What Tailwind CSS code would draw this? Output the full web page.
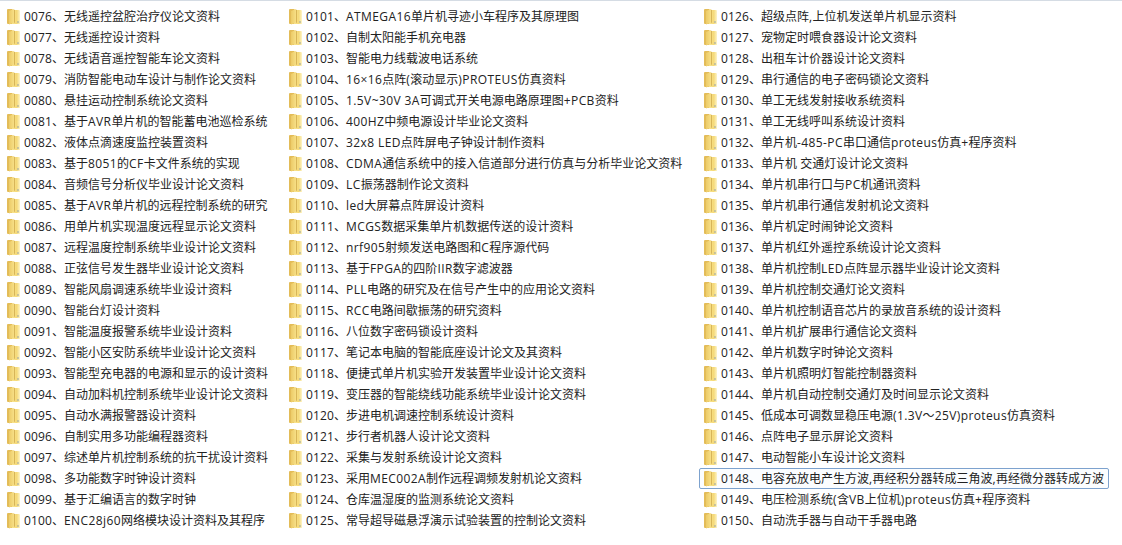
<!DOCTYPE html>
<html lang="zh">
<head>
    <meta charset="UTF-8">
    <title>资料目录</title>
    <script src="https://cdn.jsdelivr.net/npm/@tailwindcss/browser@4"></script>
</head>
<body class="bg-white overflow-hidden">
    <div id="list" class="w-[1122px] h-[545px] flex pt-[5px] border-t border-[#d5dce4] text-[12px] leading-[21px] text-[#222] font-['Open_Sans','Noto_Sans_CJK_SC',sans-serif]">
        <div id="col1" class="w-[282px] pl-[7px]"></div>
        <div id="col2" class="w-[415px] pl-[7px]"></div>
        <div id="col3" class="flex-1 pl-[7px]"></div>
    </div>

    <script>
        const columns = {
            col1: ["0076、无线遥控盆腔治疗仪论文资料","0077、无线遥控设计资料","0078、无线语音遥控智能车论文资料","0079、消防智能电动车设计与制作论文资料","0080、悬挂运动控制系统论文资料","0081、基于AVR单片机的智能蓄电池巡检系统","0082、液体点滴速度监控装置资料","0083、基于8051的CF卡文件系统的实现","0084、音频信号分析仪毕业设计论文资料","0085、基于AVR单片机的远程控制系统的研究","0086、用单片机实现温度远程显示论文资料","0087、远程温度控制系统毕业设计论文资料","0088、正弦信号发生器毕业设计论文资料","0089、智能风扇调速系统毕业设计资料","0090、智能台灯设计资料","0091、智能温度报警系统毕业设计资料","0092、智能小区安防系统毕业设计论文资料","0093、智能型充电器的电源和显示的设计资料","0094、自动加料机控制系统毕业设计论文资料","0095、自动水满报警器设计资料","0096、自制实用多功能编程器资料","0097、综述单片机控制系统的抗干扰设计资料","0098、多功能数字时钟设计资料","0099、基于汇编语言的数字时钟","0100、ENC28j60网络模块设计资料及其程序"],
            col2: ["0101、ATMEGA16单片机寻迹小车程序及其原理图","0102、自制太阳能手机充电器","0103、智能电力线载波电话系统","0104、16×16点阵(滚动显示)PROTEUS仿真资料","0105、1.5V~30V 3A可调式开关电源电路原理图+PCB资料","0106、400HZ中频电源设计毕业论文资料","0107、32x8 LED点阵屏电子钟设计制作资料","0108、CDMA通信系统中的接入信道部分进行仿真与分析毕业论文资料","0109、LC振荡器制作论文资料","0110、led大屏幕点阵屏设计资料","0111、MCGS数据采集单片机数据传送的设计资料","0112、nrf905射频发送电路图和C程序源代码","0113、基于FPGA的四阶IIR数字滤波器","0114、PLL电路的研究及在信号产生中的应用论文资料","0115、RCC电路间歇振荡的研究资料","0116、八位数字密码锁设计资料","0117、笔记本电脑的智能底座设计论文及其资料","0118、便捷式单片机实验开发装置毕业设计论文资料","0119、变压器的智能绕线功能系统毕业设计论文资料","0120、步进电机调速控制系统设计资料","0121、步行者机器人设计论文资料","0122、采集与发射系统设计论文资料","0123、采用MEC002A制作远程调频发射机论文资料","0124、仓库温湿度的监测系统论文资料","0125、常导超导磁悬浮演示试验装置的控制论文资料"],
            col3: ["0126、超级点阵,上位机发送单片机显示资料","0127、宠物定时喂食器设计论文资料","0128、出租车计价器设计论文资料","0129、串行通信的电子密码锁论文资料","0130、单工无线发射接收系统资料","0131、单工无线呼叫系统设计资料","0132、单片机-485-PC串口通信proteus仿真+程序资料","0133、单片机 交通灯设计论文资料","0134、单片机串行口与PC机通讯资料","0135、单片机串行通信发射机论文资料","0136、单片机定时闹钟论文资料","0137、单片机红外遥控系统设计论文资料","0138、单片机控制LED点阵显示器毕业设计论文资料","0139、单片机控制交通灯论文资料","0140、单片机控制语音芯片的录放音系统的设计资料","0141、单片机扩展串行通信论文资料","0142、单片机数字时钟论文资料","0143、单片机照明灯智能控制器资料","0144、单片机自动控制交通灯及时间显示论文资料","0145、低成本可调数显稳压电源(1.3V～25V)proteus仿真资料","0146、点阵电子显示屏论文资料","0147、电动智能小车设计论文资料","0148、电容充放电产生方波,再经积分器转成三角波,再经微分器转成方波","0149、电压检测系统(含VB上位机)proteus仿真+程序资料","0150、自动洗手器与自动干手器电路"]
        };

        const folderIcon = `<svg class="w-[13px] h-[17px] shrink-0 mr-[4px]" viewBox="0 0 13 17">
            <defs>
                <linearGradient id="folderBack" x1="0" y1="0" x2="1" y2="0">
                    <stop offset="0" stop-color="#f8e48f"/>
                    <stop offset=".6" stop-color="#f5d978"/>
                    <stop offset="1" stop-color="#fdf4c8"/>
                </linearGradient>
                <linearGradient id="folderFront" x1="0" y1="0" x2="1" y2="0">
                    <stop offset="0" stop-color="#eccb68"/>
                    <stop offset="1" stop-color="#f7df86"/>
                </linearGradient>
            </defs>
            <path d="M0 2 Q0 1 1 1 H5 L6 2 V16 H1 Q0 16 0 15 Z" fill="#e3bc58"/>
            <path d="M5 2 H12 Q13 2 13 3 V15.5 Q13 16 12.5 16 H5 Z" fill="url(#folderBack)"/>
            <path d="M2 3 L7 1 V14.5 L2 16.5 Z" fill="url(#folderFront)"/>
            <path d="M7 1.5 L8 2 V14.5 L7 15 Z" fill="#c39a3c" opacity=".6"/>
            <rect x="10" y="13" width="2" height="2" fill="#7f93a8" opacity=".4"/>
        </svg>`;

        // latin runs are set wider than the font's own advance
        const spaced = (text) => {
            const [num, rest] = text.split("、");
            return `<span class="tracking-[0.14px]">${num}</span>、` +
                rest.replace(/[\x21-\x7e×]+(?: [\x21-\x7e]+)*/g, (m) => `<span class="tracking-[0.4px]">${m}</span>`);
        };

        Object.entries(columns).forEach(([id, rows]) => {
            const col = document.getElementById(id);
            rows.forEach((text) => {
                const row = document.createElement("div");
                const selected = text.startsWith("0148");
                row.className = selected
                    ? "h-[21px] flex items-center whitespace-nowrap -ml-[5px] pl-[4px] w-[410px] rounded-[2px] border border-[#7da2ce] bg-[#fbfdff] box-border"
                    : "h-[21px] flex items-center whitespace-nowrap";
                row.innerHTML = folderIcon + `<span>${spaced(text)}</span>`;
                col.appendChild(row);
            });
        });
    </script>
</body>
</html>
